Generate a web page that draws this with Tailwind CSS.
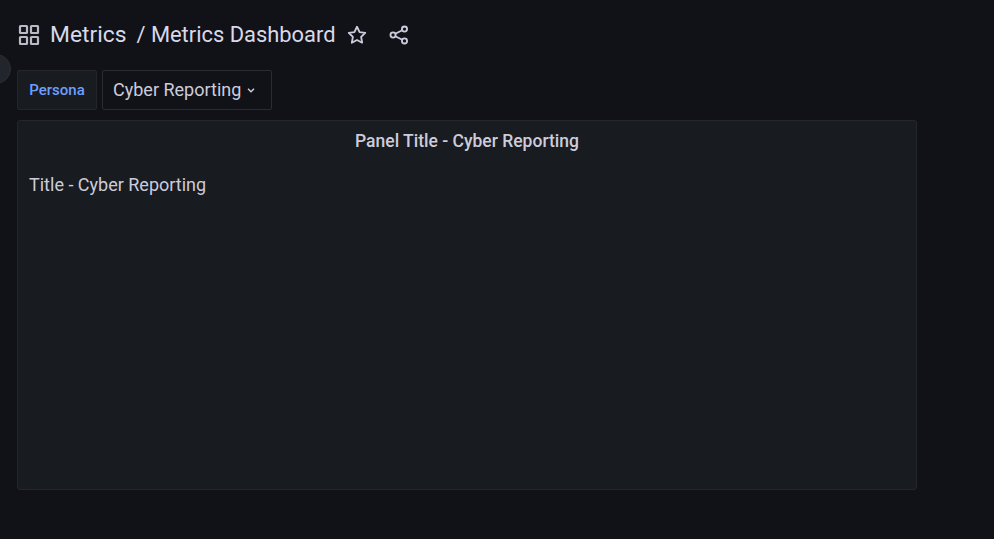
<!DOCTYPE html>
<html>
<head>
<meta charset="utf-8">
<script src="https://cdn.jsdelivr.net/npm/@tailwindcss/browser@4"></script>
</head>
<body class="relative w-[994px] h-[539px] overflow-hidden bg-[#111217] font-['Roboto',sans-serif] text-[#ccccdc]">
<div class="absolute left-[-19px] top-[54px] w-[30px] h-[30px] rounded-full bg-[#22252b] border border-[#2c2e33]"></div>
<div class="pl-[17px] pt-[19px] w-[917px]">
  <div class="h-[32px] flex items-center">
    <svg class="w-[24px] h-[24px] text-[#b9bac8]" viewBox="0 0 24 24" fill="none" stroke="currentColor" stroke-width="2.2"><rect x="3" y="3" width="7" height="7" rx="0.5"/><rect x="14" y="3" width="7" height="7" rx="0.5"/><rect x="3" y="14" width="7" height="7" rx="0.5"/><rect x="14" y="14" width="7" height="7" rx="0.5"/></svg>
    <span class="ml-[9px] text-[22.8px] leading-[32px] whitespace-pre text-[#d8d9ea]">Metrics</span>
    <span class="ml-[10px] text-[21.9px] leading-[32px] whitespace-pre text-[#d8d9ea]">/ Metrics Dashboard</span>
    <svg class="ml-[10px] w-[22px] h-[22px]" viewBox="0 0 24 24" fill="none" stroke="#ccccdc" stroke-width="2" stroke-linejoin="round"><path d="M12 3l2.8 5.8 6.2.9-4.5 4.4 1.1 6.3L12 17.4l-5.6 3 1.1-6.3L3 9.7l6.2-.9z"/></svg>
    <svg class="ml-[20px] w-[22px] h-[22px]" viewBox="0 0 24 24" fill="none" stroke="#ccccdc" stroke-width="2"><circle cx="18" cy="5.5" r="2.8"/><circle cx="5.5" cy="12" r="2.8"/><circle cx="18" cy="18.5" r="2.8"/><path d="M8 10.7l7.5-3.9M8 13.3l7.5 3.9"/></svg>
  </div>
  <div class="mt-[19px] flex gap-[5px] h-[40px]">
    <div class="w-[80px] flex items-center justify-center bg-[#181b1f] border border-[#24262c] rounded-[2px] text-[15px] font-medium text-[#6e9fff]">Persona</div>
    <div class="w-[170px] flex items-center pl-[10px] pb-[2px] bg-[#111217] border border-[#2a2c31] rounded-[2px] text-[18px] text-[#ccccdc]"><span>Cyber Reporting</span>
      <svg class="ml-[2px] mt-[2px] w-[16px] h-[16px]" viewBox="0 0 24 24" fill="none" stroke="#ccccdc" stroke-width="2.2"><path d="M7.5 10l4.5 4.5 4.5-4.5"/></svg>
    </div>
  </div>
  <div class="mt-[10px] h-[370px] bg-[#181b1f] border border-[#24262c] rounded-[3px]">
    <div class="h-[40px] flex items-center justify-center text-[17.5px] font-medium text-[#ccccdc]">Panel Title - Cyber Reporting</div>
    <div class="pl-[11px] pt-[10px] text-[18px] leading-[28px] text-[#ccccdc]">Title - Cyber Reporting</div>
  </div>
</div>
</body>
</html>
